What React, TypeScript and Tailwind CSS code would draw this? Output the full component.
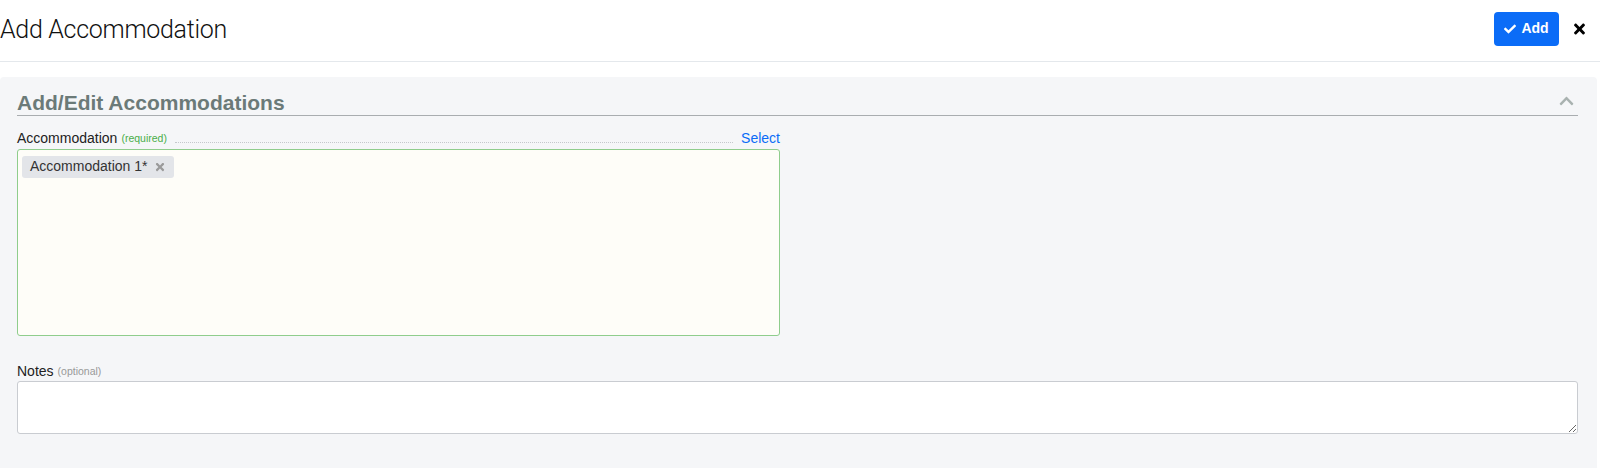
import { FaCheck, FaTimes, FaChevronUp } from 'react-icons/fa'

// modal header + accommodation form panel
export default function App() {
  return (
    <div className="w-[1600px] h-[468px] bg-white overflow-hidden font-['Liberation_Sans',Arial,sans-serif] text-[#222]">
      <div className="flex items-center justify-between h-[62px] border-b border-[#e4e8ec] pr-[14px]">
        <h1 className="font-['Roboto',sans-serif] font-light text-[25px] leading-[30px] mt-[-2px] tracking-[-0.3px] text-[#111]">
          Add Accommodation
        </h1>
        <div className="flex items-center gap-[14px] mt-[-4px]">
          <button className="flex items-center justify-center gap-[5px] w-[65px] h-[34px] rounded-[4px] bg-[#0b6cf7] text-white text-[14px] font-bold">
            <FaCheck className="w-[12px] h-[12px]" />
            Add
          </button>
          <FaTimes className="w-[13px] h-[16px] text-black" />
        </div>
      </div>

      <div className="mt-[15px] mr-[3px] bg-[#f5f6f8] rounded-[4px] pl-[17px] pr-[19px] pt-[14px] pb-[40px]">
        <div className="flex items-center justify-between border-b border-[#a9adb0] h-[25px]">
          <h2 className="text-[21px] leading-[24px] font-bold text-[#6b7a78]">
            Add/Edit Accommodations
          </h2>
          <FaChevronUp className="w-[17px] h-[16px] text-[#a9b2b0] mr-[3px] mt-[-4px]" />
        </div>

        <div className="w-[763px]">
          <div className="flex items-end mt-[14px] h-[16px] text-[14px] leading-[16px]">
            <span>Accommodation</span>
            <span className="ml-[4px] text-[10.5px] text-[#4aae4a]">(required)</span>
            <span className="flex-1 mx-[8px] mb-[3px] border-b border-dotted border-[#c4c8cc]" />
            <span className="text-[#0b6cf7]">Select</span>
          </div>
          <div className="mt-[3px] h-[187px] border border-[#8fcd8c] rounded-[3px] bg-[#fefdf8] p-[4px]">
            <span className="inline-flex items-center gap-[7px] h-[22px] w-[152px] px-[8px] rounded-[3px] bg-[#e3e5e9] text-[14px] text-[#333]">
              Accommodation 1*
              <FaTimes className="w-[10px] h-[12px] text-[#9a9a9a]" />
            </span>
          </div>
        </div>

        <div className="flex items-end mt-[27px] h-[16px] text-[14px] leading-[16px]">
          <span>Notes</span>
          <span className="ml-[4px] text-[10.5px] text-[#999]">(optional)</span>
        </div>
        <textarea className="block mt-[2px] w-full h-[53px] border border-[#c9ccd1] rounded-[3px] bg-white" />
      </div>
    </div>
  )
}
